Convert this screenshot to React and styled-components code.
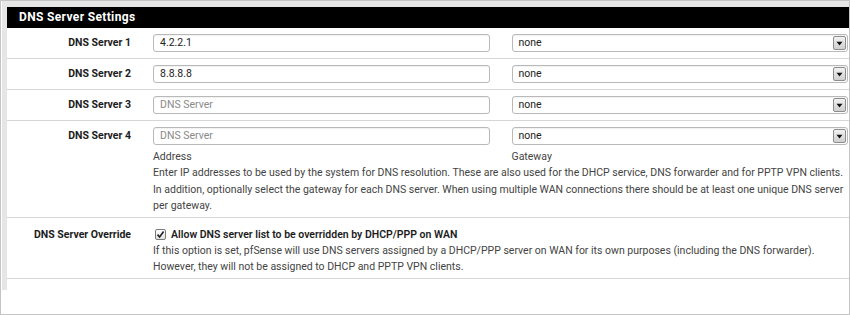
import styled, { createGlobalStyle } from "styled-components";

const Global = createGlobalStyle`
  body {
    margin: 0;
    background: #fff;
    font-family: Roboto, "Liberation Sans", Arial, sans-serif;
  }
`;

const Frame = styled.div`
  width: 850px;
  height: 315px;
  box-sizing: border-box;
  border: 1px solid #c4c4c4;
  background: #fff;
  overflow: hidden;
`;

const Sheet = styled.div`
  height: 283px;
  padding: 6px 0 0 5px;
  margin-left: 1px;
  background: #e6e6e6;
`;

const Panel = styled.div`
  height: 100%;
  background: #fff;
`;

const Header = styled.div`
  height: 21px;
  background: #000;
  color: #fff;
  font-size: 12px;
  font-weight: 700;
  letter-spacing: 0.35px;
  line-height: 21px;
  padding-left: 12px;
`;

const Row = styled.div`
  display: grid;
  grid-template-columns: 146px minmax(0, 1fr);
  border-bottom: 1px solid #d6d6d6;
  padding: ${(p) => p.$pad || "6px 0 6px"};
`;

const Label = styled.div`
  text-align: right;
  padding-right: 22px;
  font-size: 10.5px;
  font-weight: 700;
  color: #1c1c1c;
  line-height: ${(p) => p.$lh || "18px"};
`;

const Content = styled.div`
  display: flex;
  flex-direction: column;
  min-width: 0;
  padding-right: 1px;
`;

const Fields = styled.div`
  display: grid;
  grid-template-columns: minmax(0, 1fr) minmax(0, 1fr);
  column-gap: 22px;
`;

const Input = styled.div`
  height: 18px;
  box-sizing: border-box;
  border: 1px solid #b9b9b9;
  border-radius: 3px;
  box-shadow: inset 0 1px 1px rgba(0, 0, 0, 0.06);
  padding-left: 6px;
  font-size: 10.5px;
  line-height: 16px;
  color: ${(p) => (p.$placeholder ? "#8a8a8a" : "#222")};
`;

const Select = styled(Input)`
  display: flex;
  justify-content: space-between;
  align-items: center;
  padding-right: 1px;
`;

const Arrow = styled.span`
  width: 13px;
  height: 14px;
  box-sizing: border-box;
  border: 1px solid #8d8d8d;
  border-radius: 2px;
  background: linear-gradient(#f2f2f2, #cfcfcf);
  display: flex;
  align-items: center;
  justify-content: center;
`;

const SubLabels = styled(Fields)`
  margin-top: 4px;
  font-size: 10.5px;
  line-height: 16px;
  color: #444;
`;

const Help = styled.div`
  font-size: 10.5px;
  line-height: 16.5px;
  color: #444;
`;

const HelpLine = styled.div`
  white-space: nowrap;
`;

const CheckLine = styled.label`
  display: flex;
  align-items: center;
  gap: 5px;
  font-size: 10.5px;
  font-weight: 600;
  color: #1c1c1c;
  line-height: 16px;
`;

const Box = styled.span`
  width: 11px;
  height: 11px;
  box-sizing: border-box;
  border: 1px solid #7a7a7a;
  border-radius: 2px;
  background: linear-gradient(#fdfdfd, #e2e2e2);
  margin-left: 2px;
  display: flex;
  align-items: center;
  justify-content: center;
`;

const servers = [
  { label: "DNS Server 1", value: "4.2.2.1" },
  { label: "DNS Server 2", value: "8.8.8.8" },
  { label: "DNS Server 3", value: "" },
];

function Dropdown() {
  return (
    <Select>
      none
      <Arrow>
        <svg width="7" height="5" viewBox="0 0 7 5">
          <path d="M0.5 0.8 L6.5 0.8 L3.5 4.4 Z" fill="#111" />
        </svg>
      </Arrow>
    </Select>
  );
}

function Address({ value }) {
  return value ? <Input>{value}</Input> : <Input $placeholder>DNS Server</Input>;
}

export default function App() {
  return (
    <>
      <Global />
      <Frame>
        <Sheet>
          <Panel>
            <Header>DNS Server Settings</Header>
            {servers.map((s) => (
              <Row key={s.label}>
                <Label>{s.label}</Label>
                <Content>
                  <Fields>
                    <Address value={s.value} />
                    <Dropdown />
                  </Fields>
                </Content>
              </Row>
            ))}
            <Row $pad="6px 0 2px">
              <Label>DNS Server 4</Label>
              <Content>
                <Fields>
                  <Address value="" />
                  <Dropdown />
                </Fields>
                <SubLabels>
                  <span>Address</span>
                  <span>Gateway</span>
                </SubLabels>
                <Help>
                  <HelpLine>
                    Enter IP addresses to be used by the system for DNS resolution. These are also used for
                    the DHCP service, DNS forwarder and for PPTP VPN clients.
                  </HelpLine>
                  <HelpLine>
                    In addition, optionally select the gateway for each DNS server. When using multiple WAN
                    connections there should be at least one unique DNS server
                  </HelpLine>
                  <HelpLine>per gateway.</HelpLine>
                </Help>
              </Content>
            </Row>
            <Row $pad="9px 0 2px">
              <Label $lh="16px">DNS Server Override</Label>
              <Content>
                <CheckLine>
                  <Box>
                    <svg width="9" height="9" viewBox="0 0 9 9">
                      <path d="M1.5 4.6 L3.6 7 L7.6 1.5" stroke="#222" strokeWidth="1.6" fill="none" />
                    </svg>
                  </Box>
                  Allow DNS server list to be overridden by DHCP/PPP on WAN
                </CheckLine>
                <Help>
                  <HelpLine>
                    If this option is set, pfSense will use DNS servers assigned by a DHCP/PPP server on WAN
                    for its own purposes (including the DNS forwarder).
                  </HelpLine>
                  <HelpLine>However, they will not be assigned to DHCP and PPTP VPN clients.</HelpLine>
                </Help>
              </Content>
            </Row>
          </Panel>
        </Sheet>
      </Frame>
    </>
  );
}
